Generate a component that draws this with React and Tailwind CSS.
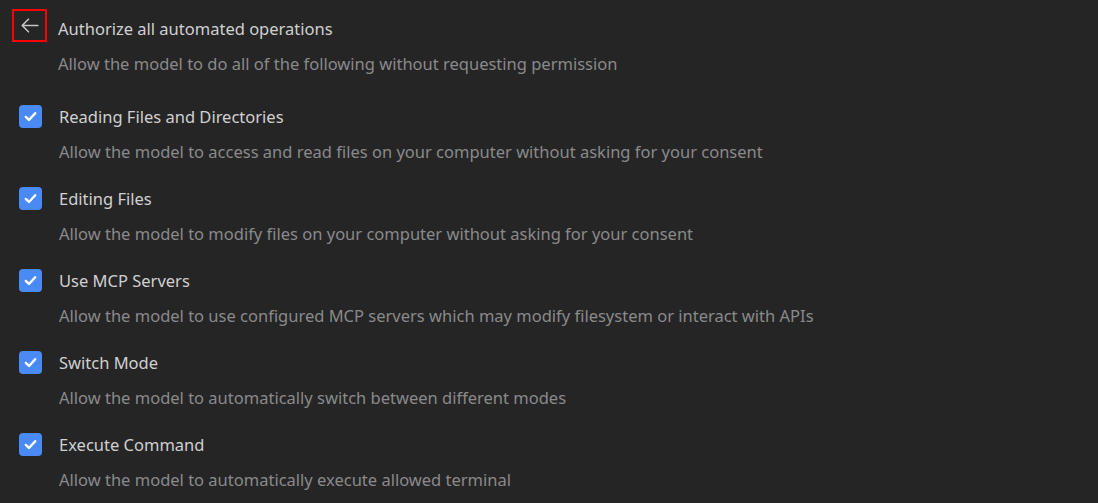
import React from "react";

const items = [
  {
    title: "Reading Files and Directories",
    desc: "Allow the model to access and read files on your computer without asking for your consent",
  },
  {
    title: "Editing Files",
    desc: "Allow the model to modify files on your computer without asking for your consent",
  },
  {
    title: "Use MCP Servers",
    desc: "Allow the model to use configured MCP servers which may modify filesystem or interact with APIs",
  },
  {
    title: "Switch Mode",
    desc: "Allow the model to automatically switch between different modes",
  },
  {
    title: "Execute Command",
    desc: "Allow the model to automatically execute allowed terminal",
  },
];

const Check = () => (
  <div className="w-[23px] h-[23px] rounded-[4px] bg-[#4a8af4] flex items-center justify-center shrink-0">
    <svg width="15" height="15" viewBox="0 0 14 14" fill="none">
      <path d="M2.6 7.4 L5.6 10.2 L11.4 3.9" stroke="white" strokeWidth="2.2" strokeLinecap="round" strokeLinejoin="round" />
    </svg>
  </div>
);

export default function App() {
  return (
    <div
      className="w-[1098px] h-[503px] overflow-hidden bg-[#252526] text-[16.5px]"
      style={{ fontFamily: '"Noto Sans", "Open Sans", sans-serif' }}
    >
      <div className="flex items-start pt-[9px] pl-[12px]">
        <div className="w-[35px] h-[33px] border-2 border-[#ff0000] flex items-center justify-center">
          <svg width="21" height="17" viewBox="0 0 20 16" fill="none">
            <path d="M18 8 H3 M9 2 L3 8 L9 14" stroke="#c4c4c4" strokeWidth="1.5" strokeLinecap="round" strokeLinejoin="round" />
          </svg>
        </div>
        <span className="ml-[11px] mt-[8px] leading-[24px] text-[#d0d0d0]">Authorize all automated operations</span>
      </div>
      <div className="pl-[58px] mt-[10px] leading-[24px] text-[#8a8a8a]">
        Allow the model to do all of the following without requesting permission
      </div>
      <div className="mt-[28px] pl-[19px] flex flex-col">
        {items.map((it, i) => (
          <div key={i} className="h-[82px]">
            <div className="flex items-center h-[24px]">
              <Check />
              <span className="ml-[17px] mt-[2px] leading-[24px] text-[#d0d0d0]">{it.title}</span>
            </div>
            <div className="pl-[40px] mt-[12px] leading-[24px] text-[#8a8a8a]">{it.desc}</div>
          </div>
        ))}
      </div>
    </div>
  );
}
